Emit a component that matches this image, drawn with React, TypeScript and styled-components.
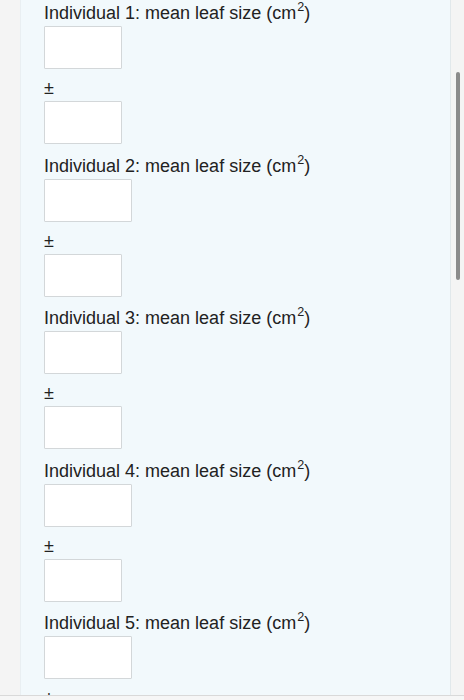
import styled, {createGlobalStyle} from "styled-components";

const GlobalStyle = createGlobalStyle`
  html, body {
    margin: 0;
    padding: 0;
    overflow: hidden;
    background: #f4f4f4;
  }
`;

const Screen = styled.div`
  width: 464px;
  height: 700px;
  display: flex;
  flex-direction: column;
  font-family: "Liberation Sans", Arial, sans-serif;
  color: #222;
`;

const Viewport = styled.div`
  flex: 1;
  position: relative;
  display: flex;
  overflow: hidden;
  background: #f4f4f4;
  padding-left: 20px;
`;

const Panel = styled.div`
  width: 406px;
  flex: none;
  background: #f2f9fc;
  border-left: 1px solid #e9eff2;
  border-right: 1px solid #e1e8eb;
  padding: 2px 0 0 23px;
  display: flex;
  flex-direction: column;
  align-self: flex-start;
`;

const Section = styled.div`
  display: flex;
  flex-direction: column;
  padding-bottom: 10.5px;
`;

const Label = styled.div`
  font-size: 18px;
  line-height: 22px;
  height: 22px;
  white-space: nowrap;
  margin-bottom: 2px;
`;

const Sup = styled.sup`
  font-size: 0.7em;
  line-height: 0;
  position: relative;
  top: -0.05em;
  margin-left: 1px;
`;

const PlusMinus = styled(Label)`
  margin-top: 8px;
`;

const Field = styled.input<{ $wide?: boolean }>`
  display: block;
  box-sizing: border-box;
  width: ${p => (p.$wide ? 88 : 78)}px;
  height: 43px;
  margin: 0;
  padding: 0 6px;
  border: 1px solid #d3d7d9;
  border-radius: 1px;
  background: #fff;
  font: inherit;
  outline: none;
`;

const ScrollThumb = styled.div`
  position: absolute;
  left: 456px;
  top: 72px;
  width: 4px;
  height: 208px;
  border-radius: 2px;
  background: #8b8b8b;
`;

const BottomStrip = styled.div`
  height: 4px;
  flex: none;
  border-top: 1px solid #d9d9d9;
  background: #f6f6f6;
`;

const individuals = [
  {n: 1, wide: false},
  {n: 2, wide: true},
  {n: 3, wide: false},
  {n: 4, wide: true},
  {n: 5, wide: true},
];

export default function App() {
  return (
    <Screen>
      <GlobalStyle />
      <Viewport>
        <Panel>
          {individuals.map(item => (
            <Section key={item.n}>
              <Label>
                Individual {item.n}: mean leaf size (cm<Sup>2</Sup>)
              </Label>
              <Field $wide={item.wide} />
              <PlusMinus>±</PlusMinus>
              <Field />
            </Section>
          ))}
        </Panel>
        <ScrollThumb />
      </Viewport>
      <BottomStrip />
    </Screen>
  );
}
